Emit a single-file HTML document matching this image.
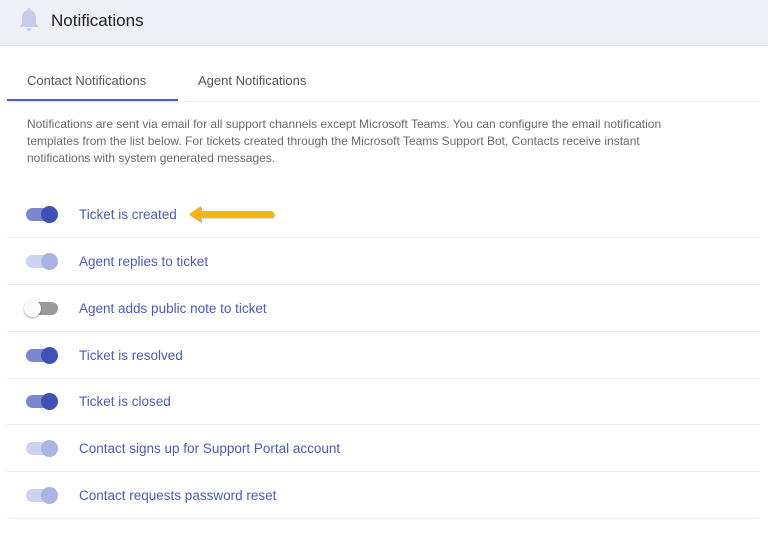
<!DOCTYPE html>
<html><head><style>
*{margin:0;padding:0;box-sizing:border-box}
body{width:768px;height:538px;background:#fff;font-family:"Liberation Sans",sans-serif;position:relative;overflow:hidden}
.hdr{position:absolute;left:0;top:0;width:768px;height:46px;background:#eff0f7;border-bottom:1px solid #e2e4ee}
.hdr .t{position:absolute;left:51px;top:11px;font-size:17px;color:#222}
.tab{position:absolute;top:73px;font-size:13px;color:#555}
.ul{position:absolute;left:7px;top:99px;width:171px;height:2px;background:#4a5bc4}
.tl{position:absolute;left:7px;top:101px;width:753px;height:1px;background:#e8e8ee}
.desc{position:absolute;left:27px;top:116px;width:655px;font-size:12px;line-height:17px;color:#6b6b6b}
.row{position:absolute;left:7px;width:753px;height:47px;border-bottom:1px solid #ebecf3}
.row span{position:absolute;left:72px;top:16px;font-size:13.5px;color:#4a5bc0}
.tr{position:absolute;left:19px;top:17px;width:32px;height:13px;border-radius:7px}
.kn{position:absolute;top:15px;width:17px;height:17px;border-radius:50%}
.on .tr{background:#7b88d0}.on .kn{left:34px;background:#3f51b5}
.dis .tr{background:#cdd3ee}.dis .kn{left:34px;background:#aab4e2}
.off .tr{background:#9a9a9a}.off .kn{left:17px;background:#fafafa;box-shadow:0 1px 2px rgba(0,0,0,.35)}
</style></head><body>
<div class="hdr">
<svg style="position:absolute;left:18px;top:6px" width="22" height="26" viewBox="0 0 22 26"><path d="M11 2c-1 0-1.5.7-1.5 1.5v.6C6 5 4 8 4 11.5v6L2 20v1h18v-1l-2-2.5v-6C18 8 16 5 12.5 4.1v-.6C12.5 2.7 12 2 11 2z" fill="#c8cce6"/><path d="M8.5 22.5h5a2.5 2.5 0 0 1-5 0z" fill="#c8cce6"/></svg>
<div class="t">Notifications</div></div>
<div class="tab" style="left:27px">Contact Notifications</div>
<div class="tab" style="left:198px">Agent Notifications</div>
<div class="tl"></div><div class="ul"></div>
<div class="desc">Notifications are sent via email for all support channels except Microsoft Teams. You can configure the email notification templates from the list below. For tickets created through the Microsoft Teams Support Bot, Contacts receive instant notifications with system generated messages.</div>
<div class="row on" style="top:191px"><div class="tr"></div><div class="kn"></div><span>Ticket is created</span>
<svg style="position:absolute;left:178px;top:13px" width="92" height="20" viewBox="0 0 92 20"><path d="M4 10l12-8v5h70a3 3 0 0 1 0 6H16v5z" fill="#333" opacity=".35" transform="translate(1,1.5)"/><path d="M4 10l12-8v5h70a3 3 0 0 1 0 6H16v5z" fill="#f5b50c"/></svg></div>
<div class="row dis" style="top:238px"><div class="tr"></div><div class="kn"></div><span>Agent replies to ticket</span></div>
<div class="row off" style="top:285px"><div class="tr"></div><div class="kn"></div><span>Agent adds public note to ticket</span></div>
<div class="row on" style="top:332px"><div class="tr"></div><div class="kn"></div><span>Ticket is resolved</span></div>
<div class="row on" style="top:378px"><div class="tr"></div><div class="kn"></div><span>Ticket is closed</span></div>
<div class="row dis" style="top:425px"><div class="tr"></div><div class="kn"></div><span>Contact signs up for Support Portal account</span></div>
<div class="row dis" style="top:472px"><div class="tr"></div><div class="kn"></div><span>Contact requests password reset</span></div>
</body></html>
